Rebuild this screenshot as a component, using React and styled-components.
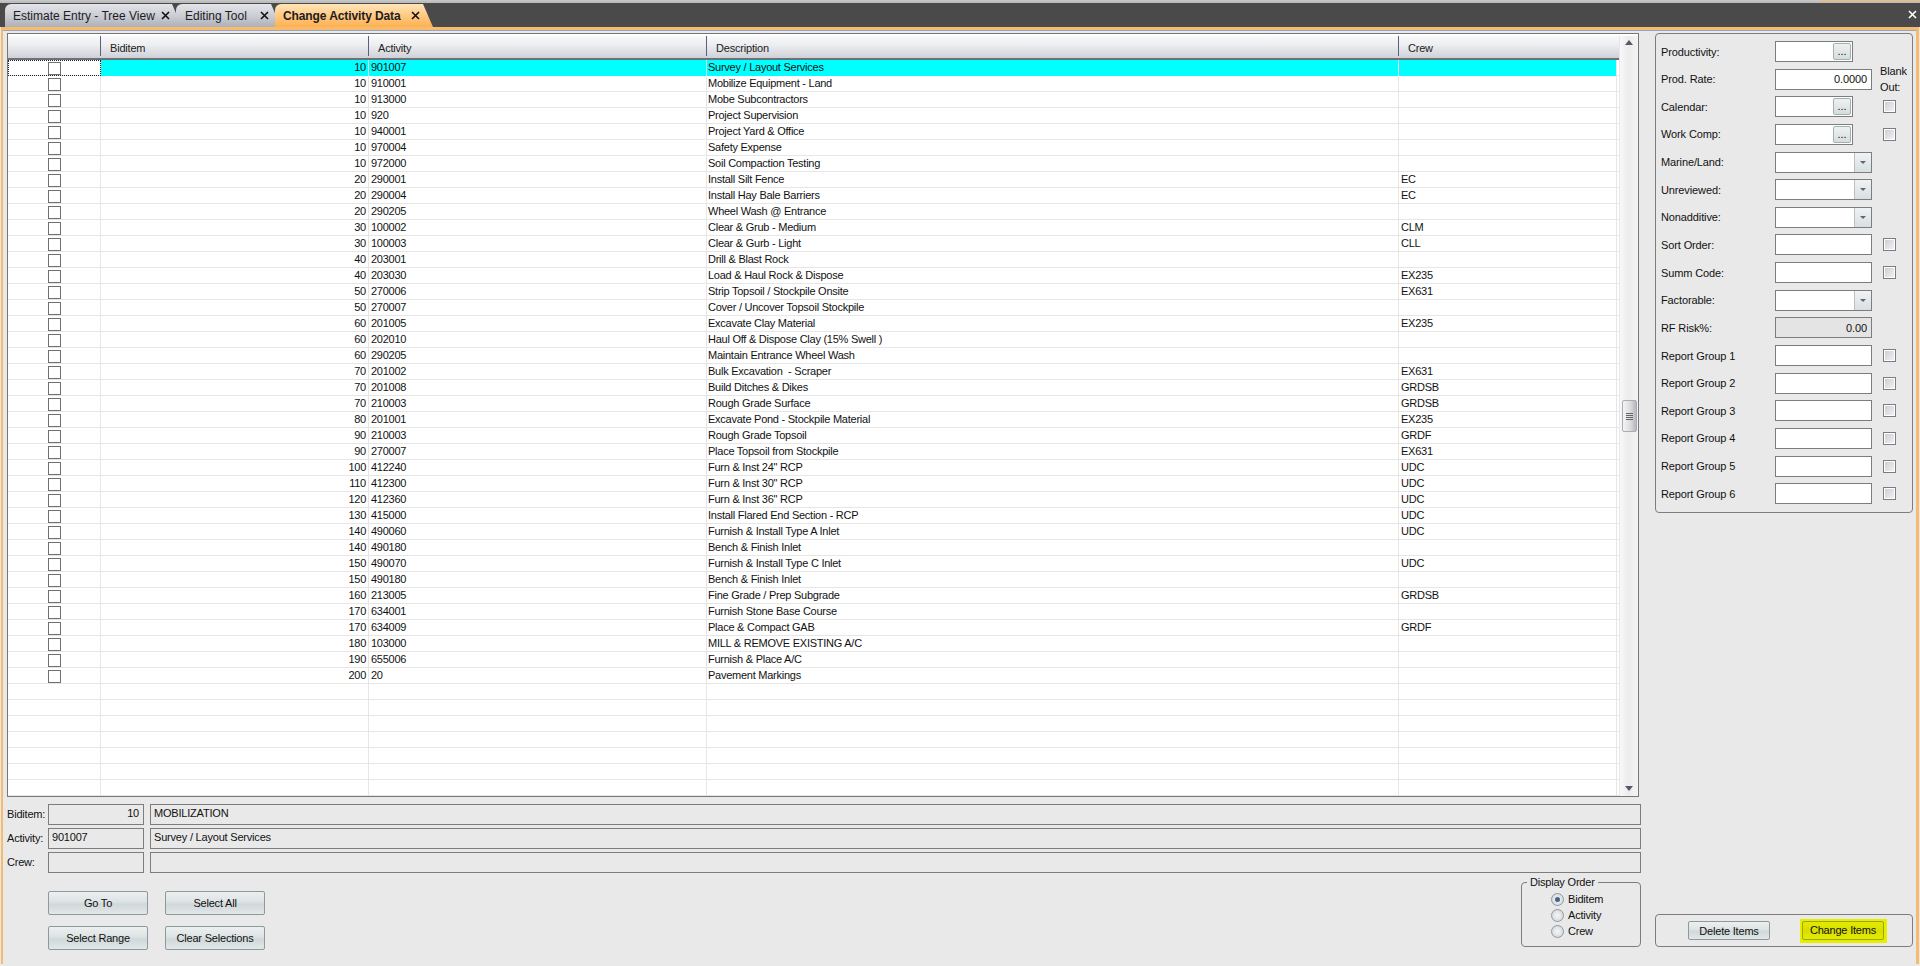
import React from 'react';
import styled, { createGlobalStyle } from 'styled-components';

const uiFont = '"Liberation Sans", Arial, sans-serif';

const GlobalStyle = createGlobalStyle`
  html, body {
    margin: 0;
    padding: 0;
    background: #e9e9e9;
    overflow: hidden;
  }
  * { box-sizing: border-box; }
`;

const Root = styled.div`
  display: flex;
  flex-direction: column;
  width: 1920px;
  height: 966px;
  font: 11px/16px ${uiFont};
  letter-spacing: -0.2px;
  color: #111;
  background: #e9e9e9;
`;

const TabStrip = styled.div`
  display: flex;
  align-items: flex-end;
  height: 27px;
  padding-left: 5px;
  background: linear-gradient(90deg, #c8c8c8 94.8%, #f7bb6e 94.8%) top / 100% 1px no-repeat,
    linear-gradient(#bdbdbd, #bdbdbd) 0 1px / 100% 2px no-repeat, #4a4a4a;
  position: relative;
`;

const Tab = styled.div`
  display: flex;
  align-items: center;
  justify-content: space-between;
  width: ${(p) => p.$width}px;
  height: 23px;
  margin-right: ${(p) => p.$overlap || 0}px;
  padding: 0 ${(p) => p.$padRight}px 0 ${(p) => p.$padLeft}px;
  border-radius: 6px 8px 0 0;
  clip-path: polygon(0 0, calc(100% - 10px) 0, 100% 100%, 0 100%);
  font-size: 12px;
  white-space: nowrap;
  letter-spacing: ${(p) => (p.$active ? '-0.1px' : '0')};
  font-weight: ${(p) => (p.$active ? 700 : 400)};
  color: #1c1c24;
  background: ${(p) =>
    p.$active
      ? 'linear-gradient(#ffe5b8, #ffc77e 55%, #ffb04f)'
      : 'linear-gradient(#e3e5ea, #c9cbd2 55%, #aeb0b8)'};
`;

const CloseIcon = ({ size = 9, color = '#111' }) => (
  <svg width={size} height={size} viewBox="0 0 9 9" fill="none">
    <path d="M1 1l7 7M8 1L1 8" stroke={color} strokeWidth="1.6" />
  </svg>
);

const WindowClose = styled.div`
  position: absolute;
  right: 3px;
  top: 10px;
  display: flex;
`;

const Frame = styled.div`
  flex: 1;
  display: flex;
  gap: 15px;
  min-height: 0;
  margin: 0 1px 2px 1px;
  padding: 3px 3px 0 4px;
  border: 3px solid #f7bb6e;
  border-width: 3px 3px 0 2px;
  box-shadow: inset 0 1px 0 #9aa4c0;
`;

const LeftColumn = styled.div`
  width: 1633px;
  display: flex;
  flex-direction: column;
`;

const RightColumn = styled.div`
  width: 258px;
  display: flex;
  flex-direction: column;
`;

const TableBox = styled.div`
  display: flex;
  width: 1632px;
  height: 764px;
  padding-top: 2px;
  border: 1px solid #777;
  background: #fff;
`;

const TableMain = styled.div`
  width: 1611px;
`;

const columns = '93px 268px 338px 692px 218px 2px';

const HeaderRow = styled.div`
  display: grid;
  grid-template-columns: ${columns};
  height: 24px;
  border-bottom: 2px solid #6c7078;
  background: linear-gradient(#f9f9fb, #eceef0 40%, #cfd1d8);
`;

const HeaderCell = styled.div`
  padding: 4px 0 0 9px;
  line-height: 16px;
  color: #222;
  & + & {
    position: relative;
  }
  & + &::before {
    content: '';
    position: absolute;
    left: -1px;
    top: 0;
    bottom: 2px;
    width: 1px;
    background: #5d5d82;
  }
`;

const DataRow = styled.div`
  display: grid;
  grid-template-columns: ${columns};
  height: 16px;
  background: linear-gradient(#e6e6e6, #e6e6e6) bottom / 100% 1px no-repeat;
`;

const Cell = styled.div`
  position: relative;
  padding: 0 ${(p) => (p.$right ? '2px' : '0')} 0 ${(p) => (p.$right ? '0' : p.$inset || '2px')};
  line-height: 15px;
  letter-spacing: -0.25px;
  white-space: pre;
  text-align: ${(p) => (p.$right ? 'right' : 'left')};
  background: ${(p) => (p.$selected ? '#00ffff' : 'transparent')};
  border-right: 1px solid #e6e6e6;
`;

const CheckCell = styled.div`
  display: flex;
  align-items: center;
  justify-content: center;
  padding-left: 1px;
  border-right: 1px solid #e6e6e6;
  outline: ${(p) => (p.$focused ? '1px dotted #222' : 'none')};
  outline-offset: -1px;
`;

const GridCheck = styled.span`
  width: 13px;
  height: 13px;
  border: 1px solid #6f6f6f;
  background: #fff;
`;

const ScrollBar = styled.div`
  flex: 1;
  display: flex;
  flex-direction: column;
  align-items: center;
  background: linear-gradient(90deg, #f8f8f8, #ececec 50%, #f4f4f4);
  border-left: 1px solid #e8e8e8;
`;

const Arrow = styled.span`
  width: 0;
  height: 0;
  border-left: 4.5px solid transparent;
  border-right: 4.5px solid transparent;
  ${(p) => (p.$down ? 'border-top: 5px solid #555b66;' : 'border-bottom: 5px solid #555b66;')}
  margin: ${(p) => (p.$down ? 'auto 0 5px' : '4px 0 0')};
`;

const Thumb = styled.div`
  display: flex;
  align-items: center;
  justify-content: center;
  width: 15px;
  height: 32px;
  margin-top: 355px;
  border: 1px solid #a9acb0;
  border-radius: 2px;
  background: linear-gradient(90deg, #f4f4f4, #dcdcdc 55%, #b8b8bc);
`;

const ThumbGrip = styled.span`
  width: 7px;
  height: 7px;
  background: repeating-linear-gradient(#5f6670 0 1px, transparent 1px 2px);
`;

const InfoRows = styled.div`
  display: flex;
  flex-direction: column;
  gap: 3px;
  margin-top: 7px;
`;

const InfoRow = styled.div`
  display: grid;
  grid-template-columns: 41px 96px 1fr;
  height: 21px;
  margin-right: -1px;
  & > :last-child {
    margin-left: 6px;
  }
`;

const InfoLabel = styled.label`
  line-height: 21px;
  white-space: nowrap;
`;

const ReadField = styled.div`
  height: 21px;
  padding: 0 ${(p) => (p.$right ? '4px' : '3px')};
  line-height: 17px;
  text-align: ${(p) => (p.$right ? 'right' : 'left')};
  border: 1px solid #7d7d7d;
  background: #e9e9e9;
`;

const BottomRow = styled.div`
  display: flex;
  justify-content: space-between;
  margin-top: 9px;
`;

const ButtonGrid = styled.div`
  display: grid;
  grid-template-columns: 100px 100px;
  grid-auto-rows: 24px;
  gap: 11px 17px;
  margin: 9px 0 0 41px;
`;

const Button = styled.div`
  display: flex;
  align-items: center;
  justify-content: center;
  height: ${(p) => p.$height || 24}px;
  width: ${(p) => (p.$width ? `${p.$width}px` : 'auto')};
  border: 1px solid ${(p) => (p.$hot ? '#9fa600' : '#8c9a9c')};
  border-radius: 2px;
  background: ${(p) =>
    p.$hot
      ? 'linear-gradient(#e3ea00, #d8df00 50%, #e4eb00)'
      : 'linear-gradient(#eceff0, #dde3e4 45%, #d0d8d9 55%, #e2e7e8)'};
`;

const DisplayOrder = styled.fieldset`
  width: 120px;
  height: 72px;
  margin: -7px -1px 0 0;
  padding: 0;
  border: 1px solid #7d7d7d;
  border-radius: 4px;
  min-inline-size: 0;
`;

const Legend = styled.legend`
  padding: 0 3px;
  margin-left: 5px;
  line-height: 14px;
`;

const RadioList = styled.div`
  display: flex;
  flex-direction: column;
  margin: 2px 0 0 29px;
`;

const RadioRow = styled.div`
  display: flex;
  align-items: center;
  gap: 4px;
  height: 16px;
`;

const Radio = styled.span`
  display: flex;
  align-items: center;
  justify-content: center;
  width: 13px;
  height: 13px;
  border: 1px solid #8f9aa0;
  border-radius: 50%;
  background: radial-gradient(#f4f5f6, #cdd2d6);
  &::after {
    content: '';
    width: 5px;
    height: 5px;
    border-radius: 50%;
    background: ${(p) => (p.$on ? '#48648a' : 'transparent')};
  }
`;

const FieldsPanel = styled.div`
  display: flex;
  flex-direction: column;
  gap: 6.65px;
  height: 480px;
  padding: 7px 0 0 5px;
  border: 1px solid #7d7d7d;
  border-radius: 4px;
  letter-spacing: -0.12px;
`;

const FieldRow = styled.div`
  display: grid;
  grid-template-columns: 114px 97px 1fr;
  grid-template-rows: 21px;
  align-items: center;
  height: 21px;
`;

const FieldLabel = styled.span`
  white-space: nowrap;
`;

const Input = styled.div`
  display: flex;
  align-items: center;
  justify-content: flex-end;
  width: ${(p) => (p.$short ? 78 : 97)}px;
  height: 21px;
  padding-right: ${(p) => (p.$pad ? '4px' : '0')};
  border: 1px solid #7d7d7d;
  background: ${(p) => (p.$disabled ? '#e4e4e4' : '#fff')};
`;

const Dots = styled.span`
  width: 18px;
  height: 17px;
  margin-right: 1px;
  text-align: center;
  line-height: 15px;
  border: 1px solid #a3b0b2;
  border-radius: 2px;
  background: linear-gradient(#eef1f2, #d6dddd);
`;

const SelectArrow = styled.span`
  display: flex;
  align-items: center;
  justify-content: center;
  width: 17px;
  height: 100%;
  border-left: 1px solid #b9c0c4;
  background: linear-gradient(#f0f3f4, #d8dfe2);
  &::after {
    content: '';
    border-left: 3px solid transparent;
    border-right: 3px solid transparent;
    border-top: 3px solid #5f6670;
  }
`;

const BlankCheck = styled.span`
  width: 13px;
  height: 13px;
  margin-left: 11px;
  border: 1px solid #7d7d7d;
  background: linear-gradient(135deg, #c9ccd4, #f4f4f6);
  box-shadow: inset 0 0 0 1px #fff;
`;

const BlankOut = styled.div`
  margin-left: 8px;
  line-height: 16px;
`;

const ActionsPanel = styled.div`
  display: flex;
  align-items: center;
  gap: 30px;
  height: 33px;
  margin-top: auto;
  margin-bottom: 17px;
  padding-left: 32px;
  border: 1px solid #7d7d7d;
  border-radius: 4px;
`;

const Highlight = styled.div`
  padding: 2px 3px 3px 2px;
  background: #e6ee00;
`;

const rows = [
  ['10', '901007', 'Survey / Layout Services', ''],
  ['10', '910001', 'Mobilize Equipment - Land', ''],
  ['10', '913000', 'Mobe Subcontractors', ''],
  ['10', '920', 'Project Supervision', ''],
  ['10', '940001', 'Project Yard & Office', ''],
  ['10', '970004', 'Safety Expense', ''],
  ['10', '972000', 'Soil Compaction Testing', ''],
  ['20', '290001', 'Install Silt Fence', 'EC'],
  ['20', '290004', 'Install Hay Bale Barriers', 'EC'],
  ['20', '290205', 'Wheel Wash @ Entrance', ''],
  ['30', '100002', 'Clear & Grub - Medium', 'CLM'],
  ['30', '100003', 'Clear & Gurb - Light', 'CLL'],
  ['40', '203001', 'Drill & Blast Rock', ''],
  ['40', '203030', 'Load & Haul Rock & Dispose', 'EX235'],
  ['50', '270006', 'Strip Topsoil / Stockpile Onsite', 'EX631'],
  ['50', '270007', 'Cover / Uncover Topsoil Stockpile', ''],
  ['60', '201005', 'Excavate Clay Material', 'EX235'],
  ['60', '202010', 'Haul Off & Dispose Clay (15% Swell )', ''],
  ['60', '290205', 'Maintain Entrance Wheel Wash', ''],
  ['70', '201002', 'Bulk Excavation  - Scraper', 'EX631'],
  ['70', '201008', 'Build Ditches & Dikes', 'GRDSB'],
  ['70', '210003', 'Rough Grade Surface', 'GRDSB'],
  ['80', '201001', 'Excavate Pond - Stockpile Material', 'EX235'],
  ['90', '210003', 'Rough Grade Topsoil', 'GRDF'],
  ['90', '270007', 'Place Topsoil from Stockpile', 'EX631'],
  ['100', '412240', 'Furn & Inst 24" RCP', 'UDC'],
  ['110', '412300', 'Furn & Inst 30" RCP', 'UDC'],
  ['120', '412360', 'Furn & Inst 36" RCP', 'UDC'],
  ['130', '415000', 'Install Flared End Section - RCP', 'UDC'],
  ['140', '490060', 'Furnish & Install Type A Inlet', 'UDC'],
  ['140', '490180', 'Bench & Finish Inlet', ''],
  ['150', '490070', 'Furnish & Install Type C Inlet', 'UDC'],
  ['150', '490180', 'Bench & Finish Inlet', ''],
  ['160', '213005', 'Fine Grade / Prep Subgrade', 'GRDSB'],
  ['170', '634001', 'Furnish Stone Base Course', ''],
  ['170', '634009', 'Place & Compact GAB', 'GRDF'],
  ['180', '103000', 'MILL & REMOVE EXISTING A/C', ''],
  ['190', '655006', 'Furnish & Place A/C', ''],
  ['200', '20', 'Pavement Markings', ''],
];

const emptyRows = Array.from({ length: 46 - rows.length }, (_, i) => i);

const fields = [
  { label: 'Productivity:', kind: 'lookup' },
  { label: 'Prod. Rate:', value: '0.0000', blankOut: true },
  { label: 'Calendar:', kind: 'lookup', check: true },
  { label: 'Work Comp:', kind: 'lookup', check: true },
  { label: 'Marine/Land:', kind: 'select' },
  { label: 'Unreviewed:', kind: 'select' },
  { label: 'Nonadditive:', kind: 'select' },
  { label: 'Sort Order:', check: true },
  { label: 'Summ Code:', check: true },
  { label: 'Factorable:', kind: 'select' },
  { label: 'RF Risk%:', value: '0.00', disabled: true },
  { label: 'Report Group 1', check: true },
  { label: 'Report Group 2', check: true },
  { label: 'Report Group 3', check: true },
  { label: 'Report Group 4', check: true },
  { label: 'Report Group 5', check: true },
  { label: 'Report Group 6', check: true },
];

const Field = ({ field }) => (
  <FieldRow>
    <FieldLabel>{field.label}</FieldLabel>
    <Input $short={field.kind === 'lookup'} $disabled={field.disabled} $pad={!!field.value}>
      {field.value}
      {field.kind === 'lookup' && <Dots>...</Dots>}
      {field.kind === 'select' && <SelectArrow />}
    </Input>
    {field.check && <BlankCheck />}
    {field.blankOut && (
      <BlankOut>
        Blank
        <br />
        Out:
      </BlankOut>
    )}
  </FieldRow>
);

export default function App() {
  return (
    <>
      <GlobalStyle />
      <Root>
        <TabStrip>
          <Tab $width={177} $overlap={-6} $padLeft={8} $padRight={12}>
            Estimate Entry - Tree View <CloseIcon />
          </Tab>
          <Tab $width={105} $overlap={-6} $padLeft={9} $padRight={12}>
            Editing Tool <CloseIcon />
          </Tab>
          <Tab $width={158} $active $padLeft={8} $padRight={13}>
            Change Activity Data <CloseIcon />
          </Tab>
          <WindowClose>
            <CloseIcon color="#fff" />
          </WindowClose>
        </TabStrip>
        <Frame>
          <LeftColumn>
            <TableBox>
              <TableMain>
                <HeaderRow>
                  <HeaderCell />
                  <HeaderCell>Biditem</HeaderCell>
                  <HeaderCell>Activity</HeaderCell>
                  <HeaderCell>Description</HeaderCell>
                  <HeaderCell>Crew</HeaderCell>
                </HeaderRow>
                {rows.map((row, i) => (
                  <DataRow key={i}>
                    <CheckCell $focused={i === 0}>
                      <GridCheck />
                    </CheckCell>
                    <Cell $right $selected={i === 0}>{row[0]}</Cell>
                    <Cell $selected={i === 0}>{row[1]}</Cell>
                    <Cell $inset="1px" $selected={i === 0}>{row[2]}</Cell>
                    <Cell $selected={i === 0}>{row[3]}</Cell>
                  </DataRow>
                ))}
                {emptyRows.map((i) => (
                  <DataRow key={i}>
                    <Cell />
                    <Cell />
                    <Cell />
                    <Cell />
                    <Cell />
                  </DataRow>
                ))}
              </TableMain>
              <ScrollBar>
                <Arrow />
                <Thumb>
                  <ThumbGrip />
                </Thumb>
                <Arrow $down />
              </ScrollBar>
            </TableBox>
            <InfoRows>
              <InfoRow>
                <InfoLabel>Biditem:</InfoLabel>
                <ReadField $right>10</ReadField>
                <ReadField>MOBILIZATION</ReadField>
              </InfoRow>
              <InfoRow>
                <InfoLabel>Activity:</InfoLabel>
                <ReadField>901007</ReadField>
                <ReadField>Survey / Layout Services</ReadField>
              </InfoRow>
              <InfoRow>
                <InfoLabel>Crew:</InfoLabel>
                <ReadField />
                <ReadField />
              </InfoRow>
            </InfoRows>
            <BottomRow>
              <ButtonGrid>
                <Button>Go To</Button>
                <Button>Select All</Button>
                <Button>Select Range</Button>
                <Button>Clear Selections</Button>
              </ButtonGrid>
              <DisplayOrder>
                <Legend>Display Order</Legend>
                <RadioList>
                  <RadioRow><Radio $on />Biditem</RadioRow>
                  <RadioRow><Radio />Activity</RadioRow>
                  <RadioRow><Radio />Crew</RadioRow>
                </RadioList>
              </DisplayOrder>
            </BottomRow>
          </LeftColumn>
          <RightColumn>
            <FieldsPanel>
              {fields.map((field) => (
                <Field key={field.label} field={field} />
              ))}
            </FieldsPanel>
            <ActionsPanel>
              <Button $width={82} $height={19}>Delete Items</Button>
              <Highlight>
                <Button $hot $width={82} $height={19}>Change Items</Button>
              </Highlight>
            </ActionsPanel>
          </RightColumn>
        </Frame>
      </Root>
    </>
  );
}
